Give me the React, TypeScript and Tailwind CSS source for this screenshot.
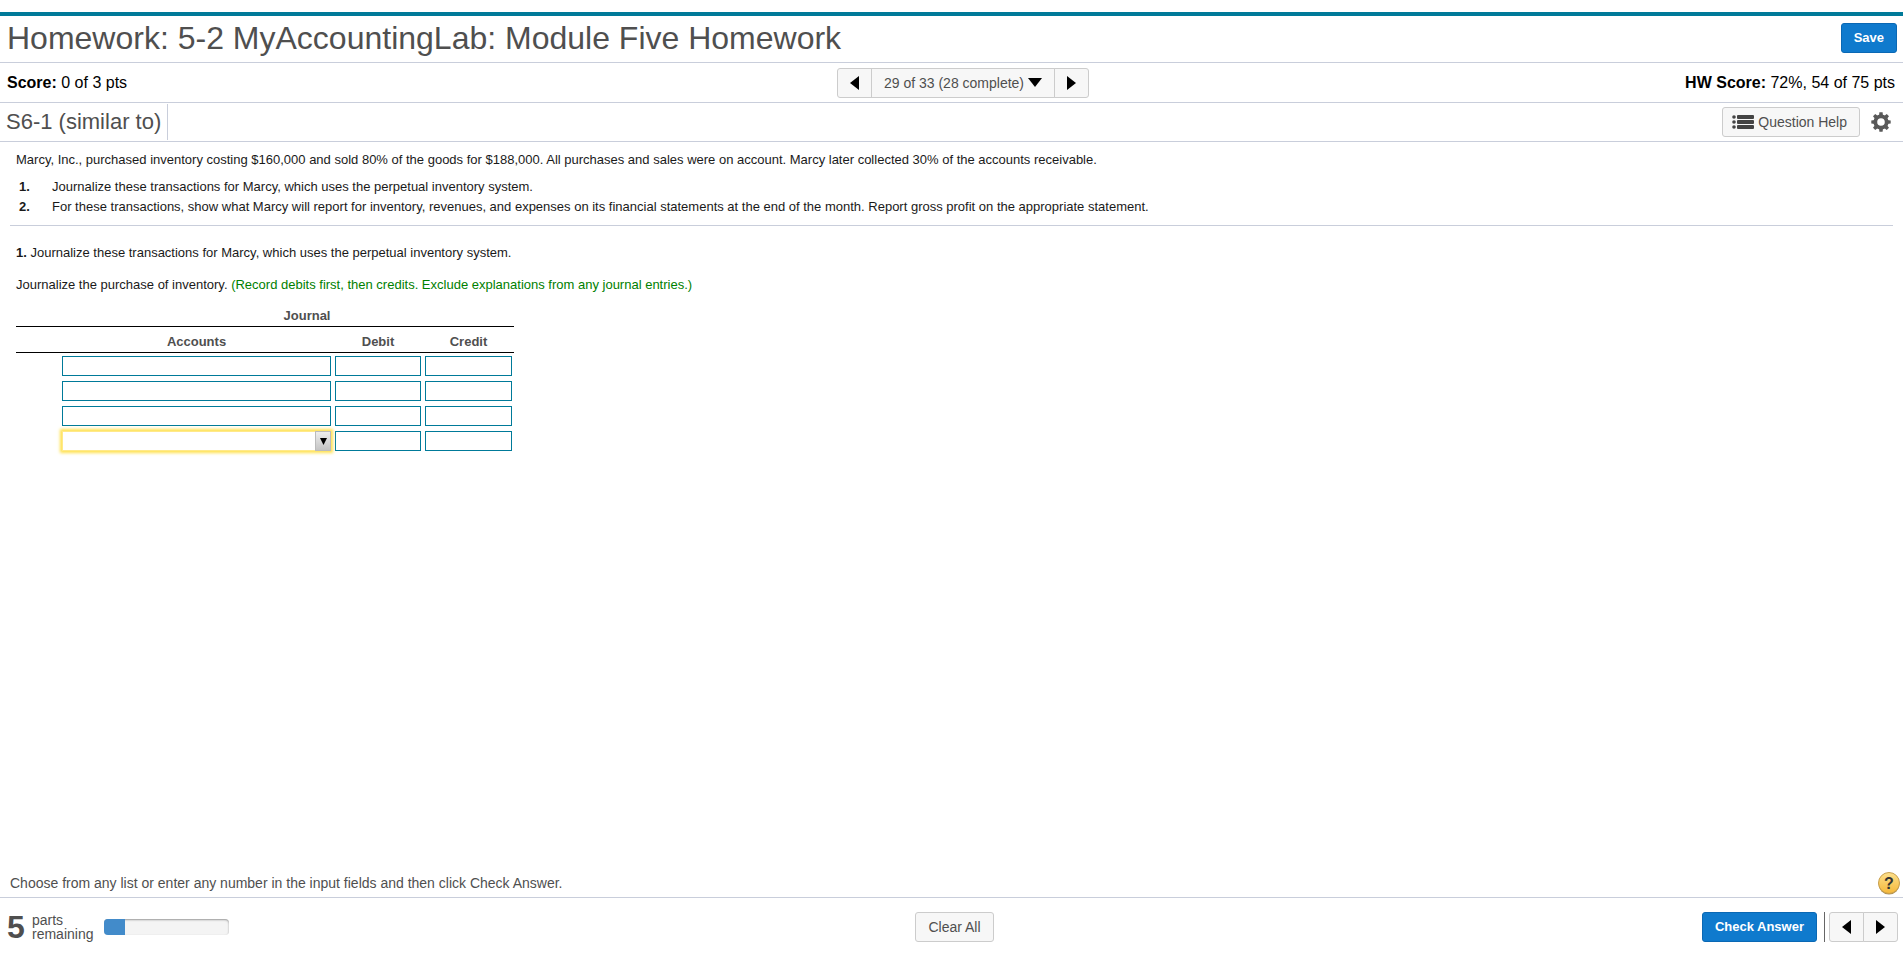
import type { ReactNode } from "react";

const ARROWS = {
  left: "M9 0 V14 L0 7 Z",
  right: "M0 0 V14 L9 7 Z",
};

const btn = "h-[30px] border border-[#ccc] bg-[#f7f7f7] text-sm text-[#4f4f4f]";
const primaryBtn =
  "h-[30px] rounded-[3px] border border-[#0a68b4] bg-[#0f7acd] px-3 text-[13px] font-bold text-white";
const field = "block h-5 w-full border border-[#007a99] bg-white px-1 text-[13px] outline-none";

function Arrow({ dir }: { dir: keyof typeof ARROWS }) {
  return (
    <svg width="9" height="14" viewBox="0 0 9 14" className="mx-auto block" aria-hidden="true">
      <path d={ARROWS[dir]} fill="#000" />
    </svg>
  );
}

function Score({ label, children }: { label: string; children: ReactNode }) {
  return (
    <div className="text-base text-black">
      <b>{label}</b> {children}
    </div>
  );
}

function ListIcon() {
  return (
    <svg width="22" height="14" viewBox="0 0 22 14" fill="#444" aria-hidden="true">
      {[2, 7, 12].map((y) => (
        <g key={y}>
          <circle cx="2" cy={y} r="1.8" />
          <rect x="5" y={y - 2} width="17" height="4" rx="1" />
        </g>
      ))}
    </svg>
  );
}

function GearIcon() {
  return (
    <svg width="20" height="20" viewBox="0 0 20 20" aria-hidden="true">
      <g fill="#595959">
        {[0, 45, 90, 135, 180, 225, 270, 315].map((a) => (
          <path key={a} d="M8 4 L8.4 0.3 H11.6 L12 4 Z" transform={`rotate(${a} 10 10)`} />
        ))}
      </g>
      <circle cx="10" cy="10" r="5.7" fill="none" stroke="#595959" strokeWidth="3.8" />
    </svg>
  );
}

function HelpIcon() {
  return (
    <svg width="22" height="23" viewBox="0 0 22 23" className="block" aria-hidden="true">
      <defs>
        <linearGradient id="help" x1="0" y1="0" x2="0" y2="1">
          <stop offset="0" stopColor="#fde08c" />
          <stop offset="1" stopColor="#f5b83a" />
        </linearGradient>
      </defs>
      <circle cx="11" cy="12" r="10.5" fill="#a48b55" />
      <circle cx="11" cy="11" r="10.5" fill="url(#help)" stroke="#c9a04e" />
      <text x="11" y="17" textAnchor="middle" fontSize="16" fontWeight="bold" fill="#333">
        ?
      </text>
    </svg>
  );
}

function JournalTable() {
  return (
    <table className="w-[498px] table-fixed border-separate border-spacing-0 text-[13px] leading-4 text-[#4f4f4f]">
      <colgroup>
        <col className="w-[44px]" />
        <col className="w-[273px]" />
        <col className="w-[90px]" />
        <col />
      </colgroup>
      <thead>
        <tr>
          <th colSpan={4} className="h-[26px] border-b border-black pb-0 pl-[84px] pr-0 pt-1">Journal</th>
        </tr>
        <tr>
          <td className="border-b border-black" />
          <th className="h-[26px] border-b border-black p-0 pt-1">Accounts</th>
          <th className="border-b border-black p-0 pt-1">Debit</th>
          <th className="border-b border-black p-0 pt-1">Credit</th>
        </tr>
      </thead>
      <tbody>
        {[1, 2, 3, 4].map((row) => (
          <tr key={row}>
            <td />
            <td className="px-0.5 pb-0.5 pt-[3px]">
              {row < 4 ? (
                <input type="text" aria-label={`Account ${row}`} className={field} />
              ) : (
                <div className="relative h-5 shadow-[0_0_3px_2px_#ffe14d]">
                  <select
                    aria-label={`Account ${row}`}
                    className="block h-5 w-full appearance-none border border-[#ffe98a] bg-white outline-none"
                  >
                    <option />
                  </select>
                  <span className="pointer-events-none absolute inset-y-0 right-0 flex w-4 items-center justify-center border border-[#bbb] bg-linear-to-b from-[#eee] to-[#c4c4c4]">
                    <svg width="7" height="7" viewBox="0 0 8 8" aria-hidden="true">
                      <path d="M0 0 H8 L4 8 Z" fill="#000" />
                    </svg>
                  </span>
                </div>
              )}
            </td>
            <td className="px-0.5 pb-0.5 pt-[3px]">
              <input type="text" aria-label={`Debit ${row}`} className={field} />
            </td>
            <td className="px-0.5 pb-0.5 pt-[3px]">
              <input type="text" aria-label={`Credit ${row}`} className={field} />
            </td>
          </tr>
        ))}
      </tbody>
    </table>
  );
}

export default function App() {
  return (
    <div className="flex min-h-screen flex-col bg-white pt-3 font-['Liberation_Sans',Arial,sans-serif]">
      <header className="flex h-[51px] items-center justify-between border-b border-t-4 border-b-[#c9cedb] border-t-[#007a99] pb-0.5 pl-[7px] pr-1.5">
        <h1 className="text-[32px] leading-none text-[#4f4f4f]">
          Homework: 5-2 MyAccountingLab: Module Five Homework
        </h1>
        <button type="button" className={primaryBtn}>Save</button>
      </header>

      <div className="grid h-10 grid-cols-[1fr_auto_1fr] items-center border-b border-[#c9cedb] pl-[7px] pr-2">
        <Score label="Score:">0 of 3 pts</Score>
        <div className="ml-6 flex">
          <button type="button" aria-label="Previous question" className={`${btn} w-[35px] rounded-l-[3px]`}>
            <Arrow dir="left" />
          </button>
          <button type="button" className={`${btn} -mx-px flex w-[184px] items-center justify-center gap-1`}>
            29 of 33 (28 complete)
            <svg width="14" height="9" viewBox="0 0 14 9" aria-hidden="true">
              <path d="M0 0 H14 L7 9 Z" fill="#000" />
            </svg>
          </button>
          <button type="button" aria-label="Next question" className={`${btn} w-[35px] rounded-r-[3px]`}>
            <Arrow dir="right" />
          </button>
        </div>
        <div className="text-right">
          <Score label="HW Score:">72%, 54 of 75 pts</Score>
        </div>
      </div>

      <div className="flex h-[39px] items-center justify-between border-b border-[#c9cedb] pl-1.5 pr-3">
        <h2 className="flex h-9 items-center border-r border-[#c9cedb] pb-0.5 pr-1.5 text-[22px] text-[#4f4f4f]">
          S6-1 (similar to)
        </h2>
        <div className="flex items-center gap-[11px]">
          <button type="button" className={`${btn} flex items-center gap-1 rounded-[3px] pl-[9px] pr-3`}>
            <ListIcon />
            Question Help
          </button>
          <button type="button" aria-label="Settings">
            <GearIcon />
          </button>
        </div>
      </div>

      <main className="flex-1 px-2.5 pt-2 text-[13px] leading-5 text-[#1a1a1a]">
        <section className="border-b border-[#c9cedb] px-1.5 pb-2">
          <p>
            Marcy, Inc., purchased inventory costing $160,000 and sold 80% of the goods for $188,000. All purchases and
            sales were on account. Marcy later collected 30% of the accounts receivable.
          </p>
          <ol className="mt-[7px]">
            <li className="flex">
              <b className="w-9 pl-[3px]">1.</b>
              Journalize these transactions for Marcy, which uses the perpetual inventory system.
            </li>
            <li className="flex">
              <b className="w-9 pl-[3px]">2.</b>
              For these transactions, show what Marcy will report for inventory, revenues, and expenses on its financial
              statements at the end of the month. Report gross profit on the appropriate statement.
            </li>
          </ol>
        </section>
        <section className="px-1.5 pt-[17px]">
          <p>
            <b>1.</b> Journalize these transactions for Marcy, which uses the perpetual inventory system.
          </p>
          <p className="mb-1.5 mt-3">
            Journalize the purchase of inventory.{" "}
            <span className="text-[#008000]">
              (Record debits first, then credits. Exclude explanations from any journal entries.)
            </span>
          </p>
          <JournalTable />
        </section>
      </main>

      <div className="flex h-[27px] items-center justify-between border-b border-[#c9cedb] pb-0.5 pl-2.5 pr-[3px] text-sm text-[#4f4f4f]">
        <p>Choose from any list or enter any number in the input fields and then click Check Answer.</p>
        <button type="button" aria-label="Help">
          <HelpIcon />
        </button>
      </div>

      <footer className="grid h-[60px] grid-cols-[1fr_auto_1fr] items-center pb-0.5 pl-[7px] pr-[5px] text-[#4f4f4f]">
        <div className="flex items-center">
          <b className="w-[25px] text-[32px] leading-none">5</b>
          <p className="w-[72px] text-sm leading-[14px]">
            parts
            <br />
            remaining
          </p>
          <div
            role="progressbar"
            aria-label="Parts completed"
            aria-valuenow={17}
            className="h-4 w-[125px] overflow-hidden rounded bg-[#f4f4f4] shadow-[inset_0_1px_2px_#999]"
          >
            <div className="h-full w-[21px] bg-[#428bca]" />
          </div>
        </div>
        <button type="button" className={`${btn} ml-1 rounded-[3px] px-3`}>Clear All</button>
        <div className="flex justify-end">
          <button type="button" className={primaryBtn}>Check Answer</button>
          <div className="ml-[7px] mr-1 w-px bg-[#666]" />
          <button type="button" aria-label="Previous part" className={`${btn} w-[35px] rounded-l-[3px]`}>
            <Arrow dir="left" />
          </button>
          <button type="button" aria-label="Next part" className={`${btn} -ml-px w-[35px] rounded-r-[3px]`}>
            <Arrow dir="right" />
          </button>
        </div>
      </footer>
    </div>
  );
}
